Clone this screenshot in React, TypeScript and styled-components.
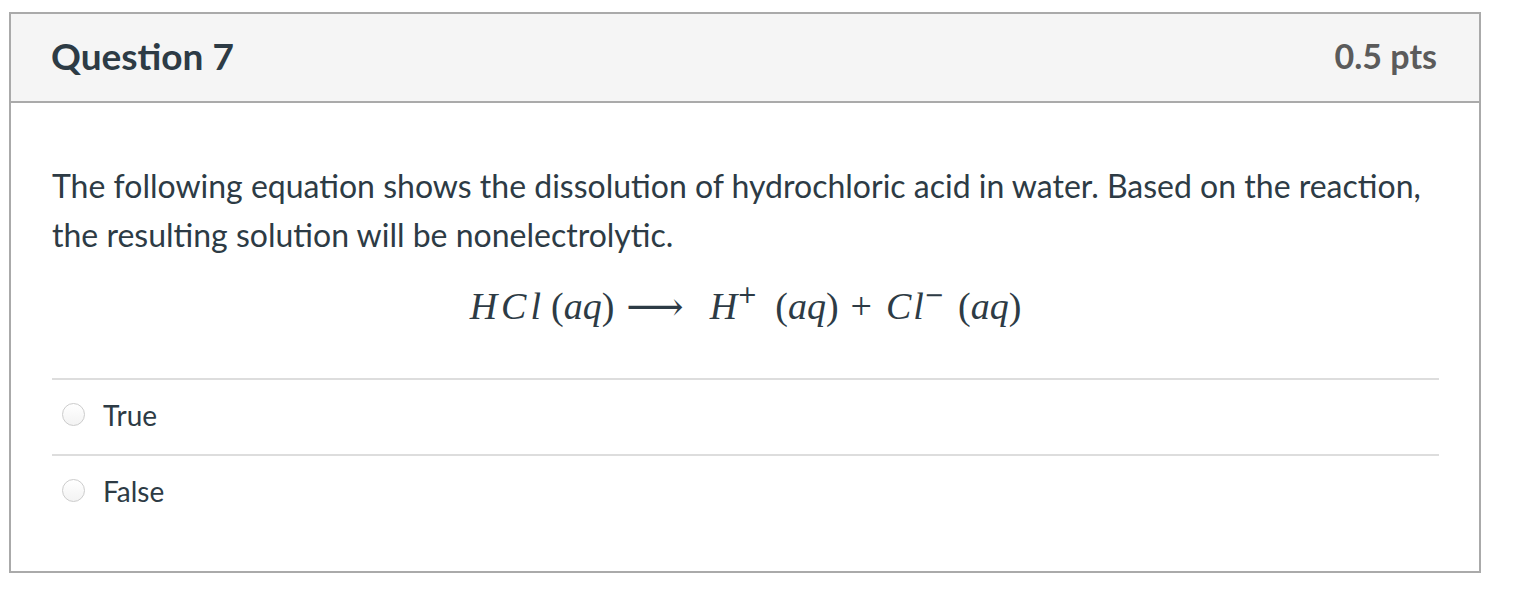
import React, { useState } from "react";
import styled, { createGlobalStyle } from "styled-components";

const GlobalStyle = createGlobalStyle`
  html, body {
    margin: 0;
    padding: 0;
    background: #fff;
  }
  body {
    font-family: Lato, "Open Sans", sans-serif;
    color: #2d3b45;
  }
`;

const Page = styled.div`
  padding: 12px 0 0 9px;
`;

const Card = styled.section`
  width: 1472px;
  box-sizing: border-box;
  border: 2px solid #aaaaaa;
  background: #fff;
`;

const Header = styled.header`
  height: 89px;
  box-sizing: border-box;
  display: flex;
  align-items: center;
  justify-content: space-between;
  padding: 0 42px 4px 40px;
  background: #f5f5f5;
  border-bottom: 2px solid #aaaaaa;
`;

const Title = styled.h2`
  margin: 0;
  font-size: 37px;
  font-weight: 700;
  color: #2d3b45;
`;

const Points = styled.div`
  font-size: 34px;
  font-weight: 700;
  color: #5b5b5b;
`;

const Body = styled.div`
  padding: 58px 40px 41px 41px;
`;

const Text = styled.p`
  margin: 0;
  font-size: 32px;
  line-height: 49px;
`;

const Equation = styled.div`
  display: flex;
  justify-content: center;
  align-items: baseline;
  height: 46px;
  margin: 23px 0 50px;
  font-family: "Liberation Serif", "Times New Roman", serif;
  font-size: 38px;
  line-height: 46px;
  color: #2d3b45;
  white-space: nowrap;
`;

const Piece = styled.span<{ $ml?: number; $italic?: boolean; $ls?: number }>`
  margin-left: ${(p) => p.$ml ?? 0}px;
  font-style: ${(p) => (p.$italic ? "italic" : "normal")};
  letter-spacing: ${(p) => p.$ls ?? 0}px;
`;

const Sup = styled.span<{ $ml?: number }>`
  margin-left: ${(p) => p.$ml ?? 0}px;
  font-family: "DejaVu Sans", sans-serif;
  font-size: 24px;
  position: relative;
  top: -16px;
`;

const Arrow = styled.span<{ $ml: number }>`
  margin-left: ${(p) => p.$ml}px;
  font-family: "DejaVu Serif", serif;
  font-size: 40px;
  position: relative;
  top: 1px;
`;

const Answer = styled.label`
  display: flex;
  align-items: center;
  height: 76px;
  box-sizing: border-box;
  padding-bottom: 5px;
  border-top: 2px solid #dddddd;
  cursor: pointer;
`;

const Radio = styled.span<{ $checked: boolean }>`
  width: 21px;
  height: 21px;
  margin: 0 18px 0 10px;
  border-radius: 50%;
  border: 1px solid #cccccc;
  background: linear-gradient(#ffffff, #f3f3f3);
  position: relative;
  &::after {
    content: "";
    display: ${(p) => (p.$checked ? "block" : "none")};
    position: absolute;
    inset: 5px;
    border-radius: 50%;
    background: #2d3b45;
  }
`;

const AnswerText = styled.span`
  font-size: 28px;
`;

const answers = ["True", "False"];

const App: React.FC = () => {
  const [picked, setPicked] = useState<number | null>(null);

  return (
    <>
      <GlobalStyle />
      <Page>
        <Card>
          <Header>
            <Title>Question 7</Title>
            <Points>0.5 pts</Points>
          </Header>
          <Body>
            <Text>
              The following equation shows the dissolution of hydrochloric acid in water. Based on the reaction,
              the resulting solution will be nonelectrolytic.
            </Text>
            <Equation>
              <Piece $italic $ls={4}>HCl</Piece>
              <Piece $ml={6}>
                (<Piece $italic>aq</Piece>)
              </Piece>
              <Arrow $ml={12}>⟶</Arrow>
              <Piece $italic $ml={26}>H</Piece>
              <Sup>+</Sup>
              <Piece $ml={18}>
                (<Piece $italic>aq</Piece>)
              </Piece>
              <Piece $ml={12}>+</Piece>
              <Piece $italic $ml={14} $ls={2}>Cl</Piece>
              <Sup $ml={-2}>−</Sup>
              <Piece $ml={14}>
                (<Piece $italic>aq</Piece>)
              </Piece>
            </Equation>
            {answers.map((a, i) => (
              <Answer key={i} onClick={() => setPicked(i)}>
                <Radio $checked={picked === i} />
                <AnswerText>{a}</AnswerText>
              </Answer>
            ))}
          </Body>
        </Card>
      </Page>
    </>
  );
};

export default App;
